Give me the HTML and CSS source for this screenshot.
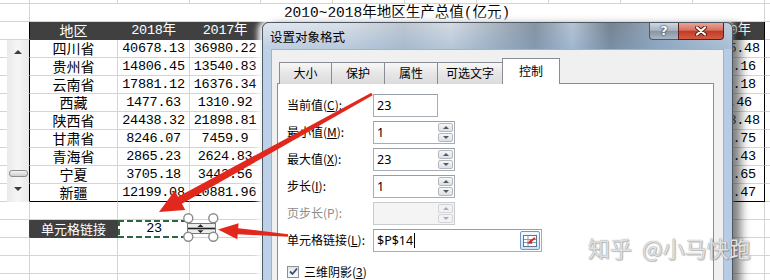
FILE: index.html
```html
<!DOCTYPE html>
<html lang="zh-CN">
<head>
    <meta charset="UTF-8">
    <meta name="viewport" content="width=device-width, initial-scale=1.0">
    <title>设置对象格式 - 控制</title>
    <link rel="stylesheet" href="styles.css">
</head>
<body>
<div class="sheet">
    <div class="grid" id="grid"></div>

    <!-- scroll bar form control in column A -->
    <div class="scrollbar">
        <span class="sb-up"></span>
        <span class="sb-thumb"></span>
        <span class="sb-down"></span>
    </div>

    <!-- selected spin button control -->
    <svg class="spin-ctrl" width="38" height="32" viewBox="0 0 38 32">
        <rect x="5.5" y="11.5" width="28" height="10" fill="#ececec" stroke="#7a7a7a"/>
        <line x1="6" y1="16.5" x2="33" y2="16.5" stroke="#1e1e1e" stroke-width="1.6"/>
        <polygon points="15.5,15 21.5,15 18.5,12.2" fill="#222"/>
        <polygon points="15.5,18.2 21.5,18.2 18.5,21" fill="#222"/>
        <circle cx="6.3" cy="6.3" r="4.5" fill="#fff" stroke="#8c8c8c" stroke-width="1.4"/>
        <circle cx="31.3" cy="6.3" r="4.5" fill="#fff" stroke="#8c8c8c" stroke-width="1.4"/>
        <circle cx="6.3" cy="24.7" r="4.5" fill="#fff" stroke="#8c8c8c" stroke-width="1.4"/>
        <circle cx="31.3" cy="24.7" r="4.5" fill="#fff" stroke="#8c8c8c" stroke-width="1.4"/>
    </svg>

    <div class="dialog">
        <div class="titlebar">
            <span class="dlg-title">设置对象格式</span>
            <div class="caption-btns">
                <span class="cap-help">?</span>
                <span class="cap-close">
                    <svg width="12" height="10" viewBox="0 0 12 10">
                        <path d="M2 1.5 L10 8.5 M10 1.5 L2 8.5" stroke="#5a1b10" stroke-width="4" stroke-linecap="round"/>
                        <path d="M2 1.5 L10 8.5 M10 1.5 L2 8.5" stroke="#fff" stroke-width="2.2" stroke-linecap="round"/>
                    </svg>
                </span>
            </div>
        </div>
        <div class="client">
            <div class="tabs">
                <span class="tab t1">大小</span>
                <span class="tab t2">保护</span>
                <span class="tab t3">属性</span>
                <span class="tab t4">可选文字</span>
                <span class="tab t5 active">控制</span>
            </div>
            <div class="panel">
                <div class="form">
                    <span class="lbl">当前值(<u>C</u>):</span>
                    <div class="field w-short"><span class="val">23</span></div>

                    <span class="lbl">最小值(<u>M</u>):</span>
                    <div class="field w-spin"><span class="val">1</span><span class="spin"><i class="up"></i><i class="down"></i></span></div>

                    <span class="lbl">最大值(<u>X</u>):</span>
                    <div class="field w-spin"><span class="val">23</span><span class="spin"><i class="up"></i><i class="down"></i></span></div>

                    <span class="lbl">步长(<u>I</u>):</span>
                    <div class="field w-spin"><span class="val">1</span><span class="spin"><i class="up"></i><i class="down"></i></span></div>

                    <span class="lbl off">页步长(P):</span>
                    <div class="field w-spin off"><span class="val"></span><span class="spin"><i class="up"></i><i class="down"></i></span></div>

                    <span class="lbl">单元格链接(<u>L</u>):</span>
                    <div class="field w-link">
                        <span class="val">$P$14</span><span class="caret"></span>
                        <span class="ref-btn">
                            <svg width="14" height="12" viewBox="0 0 14 12">
                                <rect x="0.5" y="0.5" width="13" height="11" fill="#fff" stroke="#5f7392"/>
                                <path d="M1 4.5 H13 M1 7.5 H13 M5 1 V11" stroke="#8b9ab3" stroke-width="1"/>
                                <path d="M12 3 L6.5 7" stroke="#d62a1e" stroke-width="2"/>
                                <polygon points="4,8.5 8.5,4.2 9.3,8.8" fill="#d62a1e"/>
                            </svg>
                        </span>
                    </div>
                </div>
                <div class="check-row">
                    <span class="checkbox">
                        <svg width="9" height="9" viewBox="0 0 9 9">
                            <path d="M1 4.5 L3.5 7 L8 1.5" fill="none" stroke="#3b4d7e" stroke-width="1.8"/>
                        </svg>
                    </span>
                    <span>三维阴影(<u>3</u>)</span>
                </div>
            </div>
        </div>
    </div>

    <!-- red annotation arrows -->
    <svg class="arrows" width="770" height="280" viewBox="0 0 770 280">
        <polygon fill="#e2281c" points="371.3,92.7 178.1,196.8 174.6,190.7 159,212 185.3,209.9 181.9,203.8 372.7,95.3"/>
        <polygon fill="#e2281c" points="288.1,234.2 238.2,228.2 238.6,223.2 218,229.5 237.3,239.2 237.7,234.2 287.9,236.8"/>
    </svg>

    <div class="watermark">知乎 @小马快跑</div>
</div>

<script>
    // GDP by region, 2018 down to 2010
    const years = ['2018年', '2017年', '2016年', '2015年', '2014年', '2013年', '2012年', '2011年', '2010年'];
    const regions = [
        ['四川省', '40678.13', '36980.22', '32934.54', '30053.10', '28536.66', '26392.07', '23872.80', '21026.68', '17185.48'],
        ['贵州省', '14806.45', '13540.83', '11776.73', '10502.56', '9266.39', '8086.86', '6852.20', '5701.84', '4602.16'],
        ['云南省', '17881.12', '16376.34', '14788.42', '13619.17', '12814.59', '11832.31', '10309.47', '8893.12', '7224.18'],
        ['西藏', '1477.63', '1310.92', '1151.41', '1026.39', '920.83', '815.67', '701.03', '605.83', '507.46'],
        ['陕西省', '24438.32', '21898.81', '19399.59', '18021.86', '17689.94', '16205.45', '14453.68', '12512.30', '10123.48'],
        ['甘肃省', '8246.07', '7459.9', '7200.37', '6790.32', '6836.82', '6330.69', '5650.20', '5020.37', '4120.75'],
        ['青海省', '2865.23', '2624.83', '2572.49', '2417.05', '2303.32', '2122.06', '1893.54', '1670.44', '1350.43'],
        ['宁夏', '3705.18', '3443.56', '3168.59', '2911.77', '2752.10', '2577.57', '2341.29', '2102.21', '1689.65'],
        ['新疆', '12199.08', '10881.96', '9649.70', '9324.80', '9273.46', '8443.84', '7505.31', '6610.05', '5437.47']
    ];
    const grid = document.getElementById('grid');

    function cell(text, cls) {
        const div = document.createElement('div');
        div.className = 'cell' + (cls ? ' ' + cls : '');
        div.textContent = text || '';
        grid.appendChild(div);
    }

    function blankRow() {
        for (let i = 0; i < 12; i++) cell('');
    }

    blankRow();
    cell('');
    cell('2010~2018年地区生产总值(亿元)', 'title');
    cell('');

    cell('', 'edge');
    cell('地区', 'head name');
    years.forEach((y, i) => cell(y, 'head' + (i === years.length - 1 ? ' last' : '')));
    cell('');

    regions.forEach((row, r) => {
        const bottom = r === regions.length - 1 ? ' bottom' : '';
        cell('', 'edge');
        row.forEach((v, i) => cell(v, (i === 0 ? 'name' : 'num') + (i === row.length - 1 ? ' last' : '') + bottom));
        cell('');
    });

    blankRow();
    cell('', 'dark-edge');
    cell('单元格链接', 'link-label');
    cell('23', 'link-val');
    for (let i = 0; i < 9; i++) cell('');
    blankRow();
    blankRow();
    blankRow();
</script>
</body>
</html>
```

FILE: styles.css
```css
body {
    margin: 0;
    background-color: #fff;
    font-family: "Noto Sans CJK SC", sans-serif;
    color: #000;
    overflow: hidden;
}
.sheet {
    position: relative;
    width: 770px;
    height: 280px;
    overflow: hidden;
}

/* spreadsheet grid */
.grid {
    display: grid;
    grid-template-columns: 30px 88px 72px 71px repeat(8, 72px);
    grid-auto-rows: 18px;
    margin-top: -14px;
}
.cell {
    box-sizing: border-box;
    border-right: 1px solid #d4d4d4;
    border-bottom: 1px solid #d4d4d4;
    font-family: "Liberation Mono", "Noto Sans CJK SC", monospace;
    font-size: 13.5px;
    letter-spacing: -0.3px;
    line-height: 17px;
    text-align: center;
    white-space: nowrap;
    overflow: hidden;
}
.title {
    grid-column: span 10;
    font-size: 14.5px;
    letter-spacing: 0;
    line-height: 18px;
}
.edge {
    border-right-color: #000;
}
.head {
    background-color: #404040;
    color: #fff;
    border-color: #404040;
}
.last,
.head.last {
    border-right-color: #000;
}
.bottom {
    border-bottom-color: #000;
}
.name {
    font-family: "Noto Sans CJK SC", sans-serif;
    font-size: 14px;
    letter-spacing: 0;
    overflow: visible;
}
.dark-edge {
    border-right-color: #404040;
}
.link-label {
    background-color: #404040;
    color: #fff;
    border-color: #404040;
    font-family: "Noto Sans CJK SC", sans-serif;
    font-size: 13px;
    letter-spacing: 0;
    overflow: visible;
}
.link-val {
    border: none;
    line-height: 18px;
    background:
        repeating-linear-gradient(90deg, #2f6440 0 6px, transparent 6px 9px) top / 100% 2px no-repeat,
        repeating-linear-gradient(90deg, #2f6440 0 6px, transparent 6px 9px) bottom / 100% 2px no-repeat,
        repeating-linear-gradient(180deg, #2f6440 0 6px, transparent 6px 9px) left / 2px 100% no-repeat,
        #fff;
}

/* scroll bar control */
.scrollbar {
    position: absolute;
    left: 7px;
    top: 40px;
    width: 22px;
    height: 162px;
    box-sizing: border-box;
    padding: 10px 0 11px;
    background: linear-gradient(90deg, #e9e9e9, #f6f6f6 50%, #e9e9e9);
    display: flex;
    flex-direction: column;
    align-items: center;
}
.sb-up {
    width: 0;
    height: 0;
    border-left: 4px solid transparent;
    border-right: 4px solid transparent;
    border-bottom: 4px solid #3c3c3c;
}
.sb-thumb {
    margin-top: auto;
    margin-bottom: 10px;
    width: 19px;
    height: 7px;
    box-sizing: border-box;
    border: 1px solid #8c8c8c;
    border-radius: 3px;
    background: linear-gradient(#f4f4f4, #cdcdcd);
}
.sb-down {
    width: 0;
    height: 0;
    border-left: 4px solid transparent;
    border-right: 4px solid transparent;
    border-top: 4px solid #3c3c3c;
}
.spin-ctrl {
    position: absolute;
    left: 182px;
    top: 212px;
}

/* dialog window */
.dialog {
    position: absolute;
    left: 262px;
    top: 22px;
    width: 471px;
    height: 280px;
    box-sizing: border-box;
    border: 1px solid #4d5967;
    border-radius: 7px 7px 0 0;
    background: linear-gradient(90deg, #bcd0e7, #d4e2f1 50%, #b6cbe4);
    box-shadow: 8px 3px 10px rgba(0, 0, 0, 0.5), 0 -3px 6px rgba(255, 255, 255, 0.9), -4px 0 6px rgba(255, 255, 255, 0.9);
    display: flex;
    flex-direction: column;
}
.titlebar {
    height: 26px;
    display: flex;
    align-items: flex-start;
    border-radius: 6px 6px 0 0;
    background:
        linear-gradient(180deg, rgba(255, 255, 255, 0.15), rgba(150, 182, 216, 0.45)),
        linear-gradient(90deg, #dde3ea 0%, #d2d9e1 18%, #b3bdc8 30%, #cdd4dc 40%, #9aa6b3 50%, #728090 58%, #a9b9cb 66%, #5f6d7c 74%, #8498ae 84%, #b7c6d6 100%);
}
.dlg-title {
    align-self: center;
    padding-left: 7px;
    font-size: 12.5px;
    color: #000;
}
.caption-btns {
    margin-left: auto;
    margin-right: 8px;
    display: flex;
}
.cap-help {
    width: 29px;
    height: 17px;
    box-sizing: border-box;
    border: 1px solid #4e5866;
    border-top: none;
    border-right: none;
    border-radius: 0 0 0 4px;
    background: linear-gradient(#cfd8e1, #a3afbc 50%, #8795a4 51%, #a9b6c3);
    color: #fff;
    font: bold 13px/16px "DejaVu Sans", sans-serif;
    text-align: center;
    text-shadow: 0 0 2px #1f2730, 0 0 1px #1f2730;
}
.cap-close {
    width: 46px;
    height: 17px;
    box-sizing: border-box;
    border: 1px solid #5d1f16;
    border-top: none;
    border-radius: 0 0 4px 0;
    background: linear-gradient(#e9a697, #d6705f 45%, #c23b24 52%, #d45b45);
    display: flex;
    align-items: center;
    justify-content: center;
}
.client {
    flex: 1;
    margin: 0 8px;
    padding: 8px 9px 0 5px;
    background-color: #f0f0f0;
    border: 1px solid #a3b2c5;
    border-bottom: none;
}
.tabs {
    display: flex;
    align-items: flex-end;
    height: 26px;
    padding-left: 2px;
    font-size: 12px;
}
.tab {
    box-sizing: border-box;
    height: 22px;
    line-height: 20px;
    text-align: center;
    border: 1px solid #898c95;
    border-bottom: none;
    border-right: none;
    background: linear-gradient(#f7f7f7, #e6e6e6 50%, #dcdcdc);
}
.t1 { width: 52px; }
.t2 { width: 53px; }
.t3 { width: 53px; }
.t4 { width: 65px; }
.t5 { width: 58px; }
.tab.active {
    position: relative;
    z-index: 1;
    height: 26px;
    padding-top: 2px;
    background: #fff;
    border-right: 1px solid #898c95;
}
.panel {
    height: 210px;
    margin-top: -1px;
    box-sizing: border-box;
    padding: 10px 9px 0;
    background-color: #fff;
    border: 1px solid #898c95;
    border-bottom: none;
}
.form {
    display: grid;
    grid-template-columns: 86px auto;
    grid-auto-rows: 23px;
    row-gap: 4px;
    align-items: center;
}
.lbl {
    font-size: 12px;
    padding-bottom: 3px;
}
.lbl.off {
    color: #8d8d8d;
}
.field {
    box-sizing: border-box;
    height: 23px;
    display: flex;
    align-items: center;
    padding-left: 3px;
    border: 1px solid #a6adb6;
    border-top-color: #979ea8;
    background-color: #fff;
    font-family: "Noto Sans", sans-serif;
    font-size: 12.5px;
}
.field.off {
    background-color: #f4f4f4;
    border-color: #c9cccf;
}
.w-short { width: 65px; }
.w-spin { width: 82px; }
.w-link { width: 169px; }
.spin {
    margin: 0 1px 0 auto;
    width: 15px;
    height: 19px;
    display: flex;
    flex-direction: column;
    gap: 1px;
}
.spin i {
    flex: 1;
    display: flex;
    align-items: center;
    justify-content: center;
    border: 1px solid #b3b8c0;
    border-radius: 2px;
    background: linear-gradient(#f7f7f7, #dedfe2);
}
.spin i.up::before {
    content: "";
    border-left: 3px solid transparent;
    border-right: 3px solid transparent;
    border-bottom: 3px solid #4d5a70;
}
.spin i.down::before {
    content: "";
    border-left: 3px solid transparent;
    border-right: 3px solid transparent;
    border-top: 3px solid #4d5a70;
}
.off .spin i {
    border-color: #d2d4d7;
    background: #f2f2f2;
}
.off .spin i.up::before { border-bottom-color: #a8adb5; }
.off .spin i.down::before { border-top-color: #a8adb5; }
.caret {
    width: 1px;
    height: 15px;
    margin-left: 1px;
    background-color: #000;
}
.ref-btn {
    margin: 0 1px 0 auto;
    width: 20px;
    height: 19px;
    box-sizing: border-box;
    border: 1px solid #6f98c8;
    border-radius: 2px;
    background: linear-gradient(#f2f8fe, #cfe3f7);
    display: flex;
    align-items: center;
    justify-content: center;
}
.check-row {
    margin-top: 11px;
    display: flex;
    align-items: center;
    gap: 5px;
    font-size: 12px;
}
.checkbox {
    width: 12px;
    height: 12px;
    box-sizing: border-box;
    border: 1px solid #8e8f8f;
    background: linear-gradient(#e6e6e6, #fafafa);
    display: flex;
    align-items: center;
    justify-content: center;
}

/* overlays */
.arrows {
    position: absolute;
    left: 0;
    top: 0;
    pointer-events: none;
}
.watermark {
    position: absolute;
    left: 588px;
    top: 234px;
    font-size: 22px;
    line-height: 26px;
    word-spacing: 5px;
    white-space: nowrap;
    color: rgba(236, 236, 236, 0.92);
    text-shadow: 0 0 1px #777, 1px 1px 1px rgba(0, 0, 0, 0.25);
}
```
